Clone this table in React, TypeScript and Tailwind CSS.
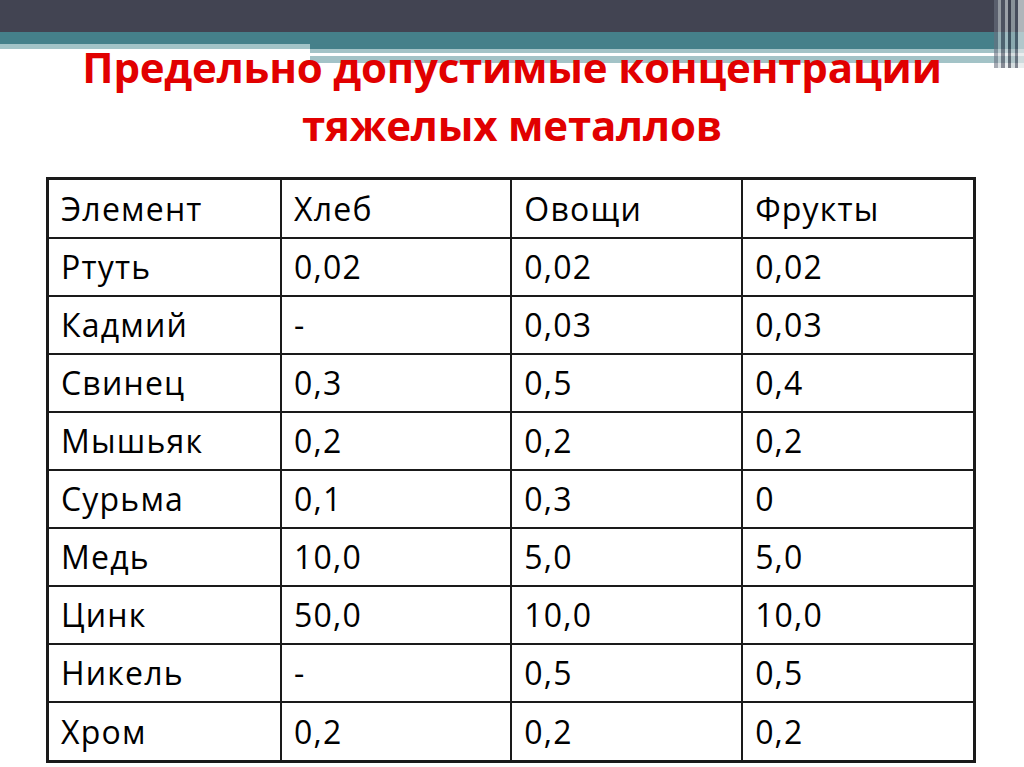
import React from "react";

const rows: string[][] = [
  ["Элемент", "Хлеб", "Овощи", "Фрукты"],
  ["Ртуть", "0,02", "0,02", "0,02"],
  ["Кадмий", "-", "0,03", "0,03"],
  ["Свинец", "0,3", "0,5", "0,4"],
  ["Мышьяк", "0,2", "0,2", "0,2"],
  ["Сурьма", "0,1", "0,3", "0"],
  ["Медь", "10,0", "5,0", "5,0"],
  ["Цинк", "50,0", "10,0", "10,0"],
  ["Никель", "-", "0,5", "0,5"],
  ["Хром", "0,2", "0,2", "0,2"],
];

export default function App() {
  return (
    <div className="relative w-[1024px] h-[767px] bg-white overflow-hidden" style={{ fontFamily: "'Open Sans', sans-serif" }}>
      {/* header bands */}
      <div className="h-[32px] bg-[#424452]" />
      <div className="flex">
        <div className="w-[310px] flex flex-col">
          <div className="h-[12px] bg-[#45808a]" />
          <div className="h-[5px] bg-[#a3c3c7]" />
        </div>
        <div className="flex-1 flex flex-col">
          <div className="h-[17px] bg-[#45808a]" />
          <div className="h-[4px] bg-[#a3c3c7]" />
          <div className="h-[3px] bg-white w-[640px]" />
          <div className="h-[7px] bg-[#a3c3c7]" />
        </div>
      </div>
      {/* right edge stripes */}
      <div className="absolute right-0 top-0 h-[68px] w-[30px] flex">
        <div className="w-[4px] bg-[#6a7280] opacity-60" />
        <div className="w-[3px] bg-[#c9d2d6] opacity-60" />
        <div className="w-[4px] bg-[#525866] opacity-70" />
        <div className="w-[3px] bg-[#d9e0e2] opacity-60" />
        <div className="w-[3px] bg-[#3c4250] opacity-70" />
        <div className="w-[4px] bg-[#b8c4c8] opacity-60" />
        <div className="w-[3px] bg-[#485060] opacity-70" />
        <div className="w-[6px] bg-[#dfe5e7] opacity-70" />
      </div>

      {/* title */}
      <div className="absolute left-0 right-0 top-[38px] text-center font-bold text-[#e10000] text-[42px] leading-[58px] tracking-[-0.2px]">
        <div>Предельно допустимые концентрации</div>
        <div>тяжелых металлов</div>
      </div>

      {/* table */}
      <div className="absolute left-[46px] top-[177px] w-[930px] border-[3px] border-[#1a1a1a]">
        <table className="w-full border-collapse">
          <tbody>
            {rows.map((r, i) => (
              <tr key={i} className={i > 0 ? "border-t-2 border-[#1a1a1a]" : ""}>
                {r.map((c, j) => (
                  <td
                    key={j}
                    className={`h-[58px] pl-[12px] text-[32px] tracking-[1.2px] text-black align-middle ${j > 0 ? "border-l-2 border-[#1a1a1a]" : ""} ${j === 0 ? "w-[233px]" : "w-[232px]"}`}
                  >
                    {c}
                  </td>
                ))}
              </tr>
            ))}
          </tbody>
        </table>
      </div>
    </div>
  );
}
